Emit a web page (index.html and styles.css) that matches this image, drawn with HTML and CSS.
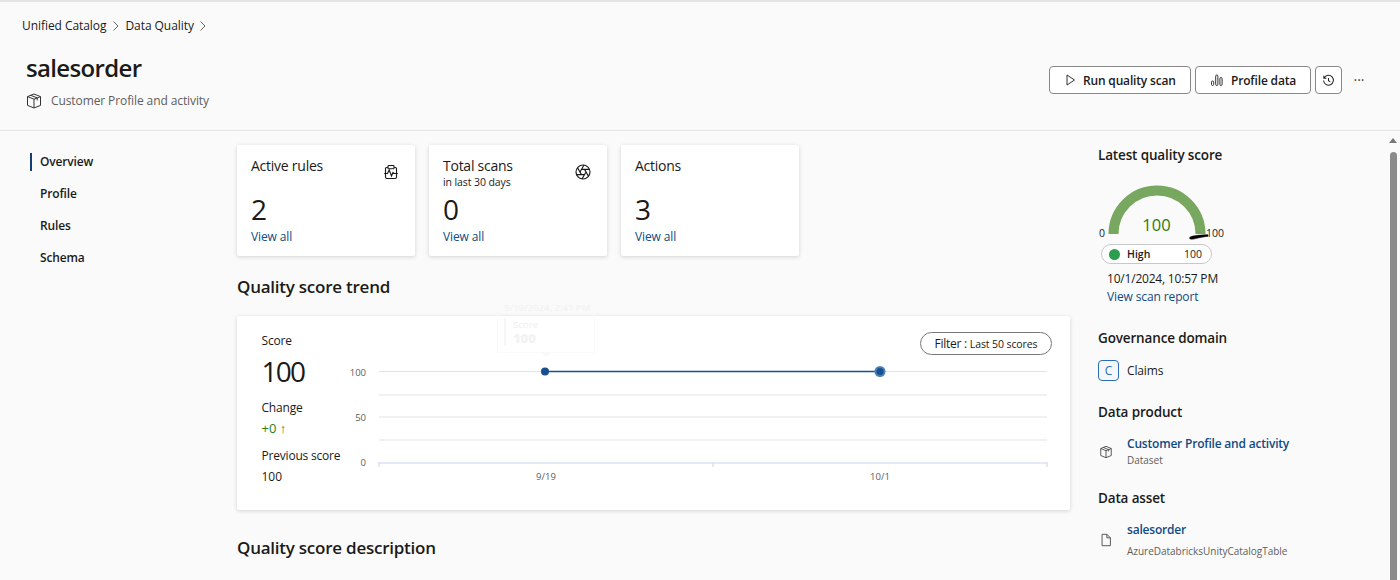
FILE: index.html
```html
<!DOCTYPE html>
<html lang="en">
<head>
<meta charset="utf-8">
<title>salesorder</title>
<link rel="stylesheet" href="styles.css">
</head>
<body>
<div class="page">
  <header class="header">
    <nav class="crumbs">
      <span>Unified Catalog</span>
      <svg class="chev" viewBox="0 0 8 12"><path d="M1.5 1.5 6 6l-4.500 4.500"/></svg>
      <span>Data Quality</span>
      <svg class="chev" viewBox="0 0 8 12"><path d="M1.500 1.500 6 6l-4.500 4.500"/></svg>
    </nav>
    <div class="head-row">
      <div class="head-text">
        <h1>salesorder</h1>
        <div class="subtitle">
          <svg class="ic16" viewBox="0 0 16 16"><path d="M8 1 14.500 3.600v8.800L8 15 1.500 12.400V3.600zM1.500 3.600 8 6.200l6.500-2.600M8 6.200V15M4.700 2.300l6.500 2.600v2.500"/></svg>
          <span>Customer Profile and activity</span>
        </div>
      </div>
      <div class="actions">
        <button class="btn run"><svg class="ic14" viewBox="0 0 14 14"><path d="M3 2v10l7.500-5z"/></svg>Run quality scan</button>
        <button class="btn prof"><svg class="ic14" viewBox="0 0 14 14"><rect x="1.500" y="8" width="2.200" height="4.500" rx="1.100"/><rect x="5.700" y="2" width="2.200" height="10.500" rx="1.100"/><rect x="9.900" y="4.500" width="2.200" height="8" rx="1.100"/></svg>Profile data</button>
        <button class="btn square"><svg class="ic14" viewBox="0 0 14 14"><path d="M2.300 4.200A5.300 5.300 0 1 1 1.700 7M2 1.800v2.700h2.700M7 4.200v3.100l2 1.200"/></svg></button>
        <span class="more">···</span>
      </div>
    </div>
  </header>
  <div class="body">
    <aside class="side">
      <a class="nav active">Overview</a>
      <a class="nav">Profile</a>
      <a class="nav">Rules</a>
      <a class="nav">Schema</a>
    </aside>
    <main class="main">
      <section class="cards">
        <article class="card">
          <div class="card-top">
            <div class="card-title">Active rules</div>
            <svg class="card-icon" viewBox="0 0 16 16"><path d="M4.800 3.500H3.500a1 1 0 0 0-1 1V13a1.500 1.500 0 0 0 1.500 1.500h8A1.500 1.500 0 0 0 13.500 13V4.500a1 1 0 0 0-1-1h-1.300"/><rect x="5" y="1.500" width="6" height="3.200" rx=".8"/><path d="M1.200 9.500h3.300l1.700-3.500 2.300 6 1.500-3.500 1 1h3.800"/></svg>
          </div>
          <div class="card-num">2</div>
          <a class="link">View all</a>
        </article>
        <article class="card">
          <div class="card-top">
            <div>
              <div class="card-title">Total scans</div>
              <div class="card-sub">in last 30 days</div>
            </div>
            <svg class="card-icon" viewBox="0 0 16 16"><circle cx="8" cy="8" r="7"/><path d="M9.500 5.400 13.500 12.330M11 8 7 14.930M9.500 10.600H1.500M6.500 10.600 2.500 3.670M5 8 9 1.070M6.500 5.400H14.500"/></svg>
          </div>
          <div class="card-num">0</div>
          <a class="link">View all</a>
        </article>
        <article class="card">
          <div class="card-top"><div class="card-title">Actions</div></div>
          <div class="card-num">3</div>
          <a class="link">View all</a>
        </article>
      </section>
      <h2 class="section">Quality score trend</h2>
      <section class="trend">
        <div class="ghost">
          <div class="ghost-date">9/19/2024, 2:41 PM</div>
          <div class="ghost-body"><span>Score</span><b>100</b></div>
          <i class="ghost-tip"></i>
        </div>
        <button class="filter">Filter : <small>Last 50 scores</small></button>
        <div class="stats">
          <div class="stat-label">Score</div>
          <div class="stat-big">100</div>
          <div class="stat-label gap1">Change</div>
          <div class="stat-up">+0 ↑</div>
          <div class="stat-label gap2">Previous score</div>
          <div class="stat-val">100</div>
        </div>
        <svg class="chart" viewBox="0 0 720 130">
          <g class="grid">
            <path d="M39 21.500H707M39 45H707M39 67H707M39 90H707"/>
          </g>
          <path class="axis" d="M39 113H707M39 112v5M373 112v5M707 112v5"/>
          <path class="series" d="M205 21.500H539"/>
          <circle class="pt" cx="205" cy="21.500" r="4"/>
          <circle class="halo" cx="540" cy="21.500" r="5.500"/>
          <circle class="pt" cx="540" cy="21.500" r="3.500"/>
          <text class="tick end" x="26" y="25.500">100</text>
          <text class="tick end" x="26" y="71">50</text>
          <text class="tick end" x="26" y="116">0</text>
          <text class="tick mid" x="206" y="130">9/19</text>
          <text class="tick mid" x="540" y="130">10/1</text>
        </svg>
      </section>
      <h2 class="section desc">Quality score description</h2>
    </main>
    <aside class="right">
      <h3 class="rh first">Latest quality score</h3>
      <svg class="gauge" viewBox="0 0 130 60">
        <path class="arc" d="M15.500 52a43.500 43.500 0 0 1 87 0"/>
        <path class="needle" d="M91.500 56c0-2 9-3 18.500-3.200v1.500c-7 .6-12 2.400-15 2.800-2 .2-3.500-.1-3.500-1.100z"/>
        <text class="g-end" x="4" y="55" text-anchor="middle">0</text>
        <text class="g-end" x="117" y="55" text-anchor="middle">100</text>
        <text class="g-val" x="58.500" y="49" text-anchor="middle">100</text>
      </svg>
      <div class="pill"><i class="dot"></i><b>High</b><span>100</span></div>
      <div class="date">10/1/2024, 10:57 PM</div>
      <a class="link pad">View scan report</a>
      <h3 class="rh">Governance domain</h3>
      <div class="domain"><span class="cbox">C</span><span>Claims</span></div>
      <h3 class="rh tight">Data product</h3>
      <div class="item">
        <svg class="ic14 grayic" viewBox="0 0 16 16"><path d="M8 1.500 14 4v8l-6 2.500L2 12V4zM2 4l6 2.500L14 4M8 6.500v8M5 2.800l6 2.500v2"/></svg>
        <div><a class="item-link">Customer Profile and activity</a><div class="item-sub">Dataset</div></div>
      </div>
      <h3 class="rh narrow">Data asset</h3>
      <div class="item">
        <svg class="ic14 grayic" viewBox="0 0 16 16"><path d="M3.500 1.500h5.500l4 4v9h-9.500zM9 1.500v4h4"/></svg>
        <div><a class="item-link">salesorder</a><div class="item-sub tall">AzureDatabricksUnityCatalogTable</div></div>
      </div>
    </aside>
    <div class="scroll"><i class="up"></i><i class="thumb"></i></div>
  </div>
</div>
</body>
</html>
```
FILE: styles.css
```css
* { box-sizing: border-box; }
html, body { margin: 0; height: 100%; }
body { font-family: "Open Sans", "Noto Sans", sans-serif; color: #1b1a19; background: #fafafa; overflow: hidden; font-size: 12px; }
.page { height: 580px; display: flex; flex-direction: column; border-top: 2px solid #e4e4e4; }
.header { height: 129px; flex: none; border-bottom: 1px solid #e3e3e3; padding: 16px 28px 0 22px; }
.crumbs { display: flex; align-items: center; gap: 5.500px; font-size: 12px; line-height: 16px; letter-spacing: -.06px; }
.chev { width: 8px; height: 12px; fill: none; stroke: #666; stroke-width: 1; }
.head-row { display: flex; justify-content: space-between; margin-top: 18px; }
.head-text { padding-left: 4px; }
h1 { margin: 0; font-size: 24px; line-height: 32px; font-weight: 600; letter-spacing: -.65px; }
.subtitle { display: flex; align-items: center; gap: 9px; margin-top: 9px; color: #5f5d5b; font-size: 12px; line-height: 16px; letter-spacing: -.1px; }
.ic16 { width: 16px; height: 16px; fill: none; stroke: #333; stroke-width: 1; }
.ic14 { width: 14px; height: 14px; fill: none; stroke: #333; stroke-width: 1; flex: none; }
.actions { display: flex; align-items: center; gap: 4px; height: 28px; margin-top: 14px; }
.btn { height: 28px; display: flex; align-items: center; padding: 0 0 0 14px; background: #fff; border: 1px solid #8a8886; border-radius: 4px; font: 600 12px "Open Sans", sans-serif; color: #1b1a19; letter-spacing: -.17px; white-space: nowrap; }
.run { width: 142px; gap: 5px; }
.prof { width: 116px; gap: 7px; }
.btn.square { width: 27px; padding: 0; justify-content: center; }
.square .ic14 { width: 13px; height: 13px; stroke: #222; stroke-width: 1.100; }
.more { width: 26px; text-align: center; font-size: 14px; color: #444; line-height: 20px; }
.body { flex: 1; display: flex; min-height: 0; overflow: hidden; }
.side { width: 237px; flex: none; padding: 22px 0 0 30px; display: flex; flex-direction: column; gap: 14px; }
.nav { height: 18px; line-height: 18px; padding-left: 8px; font-size: 12px; font-weight: 600; letter-spacing: -.15px; margin-left: 2px; }
.nav.active { border-left: 2px solid #143d73; margin-left: 0; padding-left: 8px; }
.main { width: 833px; flex: none; padding-top: 14px; }
.cards { display: flex; gap: 14px; }
.card { width: 178px; height: 111px; background: #fff; border-radius: 2px; box-shadow: 0 1px 4px rgba(0,0,0,.16); padding: 12px 14px 0; display: flex; flex-direction: column; }
.card-top { display: flex; justify-content: space-between; align-items: flex-start; height: 38px; }
.card-title { font-size: 14px; line-height: 18px; letter-spacing: -.25px; }
.card-sub { font-size: 10.500px; line-height: 14px; letter-spacing: -.1px; }
.card-icon { width: 16px; height: 16px; fill: none; stroke: #1a1a1a; stroke-width: 1.150; margin: 7px 2px 0 0; }
.card-num { font-size: 28px; line-height: 36px; margin-top: -4px; height: 36px; }
.link { color: #0f4a85; font-size: 12px; line-height: 16px; letter-spacing: -.12px; display: block; margin-top: 2px; }
.section { margin: 19px 0 0; font-size: 17px; line-height: 24px; font-weight: 600; letter-spacing: -.24px; }
.section.desc { margin-top: 26px; }
.trend { position: relative; height: 194px; margin-top: 17px; background: #fff; box-shadow: 0 1px 4px rgba(0,0,0,.16); border-radius: 2px; display: flex; }
.ghost { position: absolute; left: 260px; top: -21px; width: 98px; height: 58px; border: 1px solid #fafafa; padding: 5px 6px; color: #f2f2f2; font-size: 9.500px; font-weight: 600; }
.ghost-date { line-height: 13px; white-space: nowrap; }
.ghost-body { margin-top: 4px; border-left: 2px solid #f6f6f6; padding-left: 7px; }
.ghost-body span { display: block; line-height: 13px; }
.ghost-body b { display: block; font-size: 13px; line-height: 15px; }
.ghost-tip { position: absolute; left: 44px; bottom: -5px; border: 4px solid transparent; border-bottom: 0; border-top: 4px solid #f8f8f8; }
.filter { position: absolute; right: 18px; top: 16px; height: 23px; width: 132px; background: #fff; border: 1px solid #777; border-radius: 12px; font: 12px "Open Sans", sans-serif; color: #1b1a19; padding: 0; letter-spacing: -.25px; }
.filter small { font-size: 10.500px; letter-spacing: -.1px; }
.stats { width: 103px; flex: none; padding: 17px 0 0 25px; margin-left: -.5px; }
.stat-label { font-size: 12px; line-height: 16px; letter-spacing: -.2px; white-space: nowrap; }
.stat-big { font-size: 28px; line-height: 36px; margin-top: 4px; letter-spacing: -1.700px; font-weight: 500; }
.stat-up { color: #2a7d10; font-size: 13px; line-height: 16px; margin-top: 4px; }
.stat-val { font-size: 12px; line-height: 16px; margin-top: 5px; }
.gap1 { margin-top: 11px; }
.gap2 { margin-top: 12px; }
.chart { width: 720px; height: 130px; flex: none; margin: 34px 0 0 .5px; overflow: visible; }
.grid path { stroke: #e3e3e3; stroke-width: 1; fill: none; }
.axis { stroke: #dde1f2; fill: none; stroke-width: 1.500; }
.series { stroke: #174f8f; stroke-width: 1.500; fill: none; }
.pt { fill: #174f8f; }
.halo { fill: #4a7fb8; }
.tick { font-size: 9.500px; fill: #605e5c; }
.end { text-anchor: end; }
.mid { text-anchor: middle; }
.right { width: 289px; flex: none; padding: 15px 0 0 28px; }
.rh { margin: 24px 0 0; font-size: 13.500px; line-height: 18px; font-weight: 600; letter-spacing: -.15px; }
.rh.first { margin-top: 0; }
.rh.tight { margin-top: 22px; }
.rh.narrow { margin-top: 22px; }
.gauge { display: block; width: 130px; height: 60px; margin-top: 18px; overflow: visible; }
.arc { fill: none; stroke: #78a75f; stroke-width: 10; }
.needle { fill: #000; stroke: #000; stroke-width: .6; }
.g-end { font-size: 10.500px; fill: #1b1a19; }
.g-val { font-size: 16.500px; fill: #2a7d10; font-weight: 500; }
.pill { display: flex; align-items: center; width: 111px; height: 20px; margin: 2px 0 0 3px; border: 1px solid #c8c8c8; border-radius: 10px; background: #fff; padding: 0 9px 0 7px; font-size: 10.500px; }
.pill b { font-weight: 600; margin-left: 7px; flex: 1; }
.dot { width: 11px; height: 11px; border-radius: 50%; background: #2a9d4e; }
.date { margin: 7px 0 0 9px; font-size: 12px; line-height: 16px; font-weight: 500; letter-spacing: -.2px; }
.link.pad { margin: 2px 0 0 9px; }
.domain { display: flex; align-items: center; gap: 8px; margin-top: 13px; letter-spacing: -.15px; }
.cbox { width: 21px; height: 21px; border: 1px solid #2c6cb0; border-radius: 4px; color: #2c6cb0; background: #f4f8fc; font-size: 12px; display: flex; align-items: center; justify-content: center; }
.item { display: flex; align-items: center; gap: 14px; margin-top: 15px; padding-left: 1px; }
.grayic { stroke: #444; }
.item-link { display: block; color: #0f4a85; font-weight: 600; font-size: 12px; line-height: 16px; letter-spacing: -.2px; }
.item-sub { font-size: 10px; line-height: 14px; margin-top: 1px; color: #605e5c; letter-spacing: -.02px; }
.item-sub.tall { margin-top: 6px; }
.scroll { width: 13px; flex: none; margin-left: auto; position: relative; }
.up { position: absolute; left: 2px; top: 7px; border: 4px solid transparent; border-top: 0; border-bottom: 5px solid #777; }
.thumb { position: absolute; left: 3px; top: 21px; bottom: 0; width: 7px; border-radius: 4px 4px 0 0; background: #8b8b8b; }
```
